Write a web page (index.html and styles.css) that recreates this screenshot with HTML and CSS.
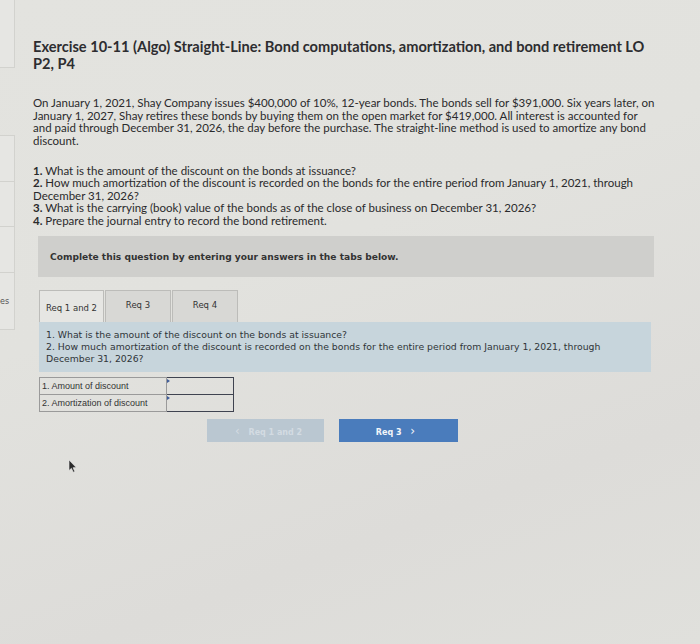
FILE: index.html
```html
<!DOCTYPE html>
<html>
<head>
<meta charset="utf-8">
<link rel="stylesheet" href="styles.css">
</head>
<body>
<div class="screen">
  <aside class="side">
    <div class="side-box b1"></div>
    <div class="side-box b2"></div>
    <div class="side-box b3"></div>
    <div class="side-box b4"></div>
    <div class="side-box b5"><span class="side-label">es</span></div>
  </aside>
  <main class="content">
    <h1 class="title">Exercise 10-11 (Algo) Straight-Line: Bond computations, amortization, and bond retirement LO<br>P2, P4</h1>
    <p class="intro">On January 1, 2021, Shay Company issues $400,000 of 10%, 12-year bonds. The bonds sell for $391,000. Six years later, on<br>January 1, 2027, Shay retires these bonds by buying them on the open market for $419,000. All interest is accounted for<br>and paid through December 31, 2026, the day before the purchase. The straight-line method is used to amortize any bond<br>discount.</p>
    <ol class="reqs">
      <li><b>1.</b> What is the amount of the discount on the bonds at issuance?</li>
      <li><b>2.</b> How much amortization of the discount is recorded on the bonds for the entire period from January 1, 2021, through<br>December 31, 2026?</li>
      <li><b>3.</b> What is the carrying (book) value of the bonds as of the close of business on December 31, 2026?</li>
      <li><b>4.</b> Prepare the journal entry to record the bond retirement.</li>
    </ol>
    <div class="notice">Complete this question by entering your answers in the tabs below.</div>
    <div class="tabs">
      <div class="tab active">Req 1 and 2</div>
      <div class="tab">Req 3</div>
      <div class="tab">Req 4</div>
    </div>
    <div class="prompt">1. What is the amount of the discount on the bonds at issuance?<br>2. How much amortization of the discount is recorded on the bonds for the entire period from January 1, 2021, through<br>December 31, 2026?</div>
    <table class="answers">
      <tr><td class="lbl">1. Amount of discount</td><td class="inp"><span class="mark"></span></td></tr>
      <tr><td class="lbl">2. Amortization of discount</td><td class="inp"><span class="mark"></span></td></tr>
    </table>
    <div class="nav">
      <button class="btn prev"><span class="chev">&lsaquo;</span> Req 1 and 2</button>
      <button class="btn next">Req 3 <span class="chev">&rsaquo;</span></button>
    </div>
    <div class="cursor-row">
      <svg class="cursor" width="9" height="14" viewBox="0 0 9 14"><path d="M1 1 L1 11.5 L3.4 9.3 L5.3 13.2 L6.8 12.5 L5 8.7 L8.2 8.5 Z" fill="#2a2a2a" stroke="#e8e8e8" stroke-width="0.6"/></svg>
    </div>
  </main>
</div>
</body>
</html>
```

FILE: styles.css
```css
html, body {
  margin: 0;
  padding: 0;
}
body {
  width: 700px;
  height: 644px;
  overflow: hidden;
  background: linear-gradient(160deg, #e3e3df 0%, #e2e2de 40%, #dddcd9 75%, #e0e0dc 100%);
  color: #2a2a2c;
}
.screen {
  display: flex;
  height: 644px;
}
.side {
  width: 15px;
  flex: none;
  display: flex;
  flex-direction: column;
}
.side-box {
  border: 1px solid #d2d2ce;
  border-left: none;
  border-top: none;
  background: #e6e6e3;
  box-sizing: border-box;
}
.b1 { height: 68px; border-top: none; }
.b2 { height: 47px; margin-top: 67px; border-top: 1px solid #d2d2ce; }
.b3 { height: 45px; }
.b4 { height: 46px; }
.b5 { height: 57px; position: relative; }
.side-label {
  position: absolute;
  left: 0;
  top: 24px;
  font-family: "DejaVu Sans", sans-serif;
  font-size: 8px;
  color: #555;
}
.content {
  flex: 1;
  padding-left: 18px;
  padding-top: 38px;
}
.title {
  font-family: Lato, "Open Sans", sans-serif;
  font-weight: 700;
  font-size: 14.6px;
  line-height: 17px;
  margin: 0;
  color: #2d2d30;
  white-space: nowrap;
}
.intro {
  font-family: Lato, "Open Sans", sans-serif;
  font-size: 11.5px;
  line-height: 12.7px;
  margin: 25px 0 0;
  white-space: nowrap;
}
.reqs {
  list-style: none;
  padding: 0;
  margin: 17px 0 0;
  font-family: Lato, "Open Sans", sans-serif;
  font-size: 11.5px;
  line-height: 12.5px;
  white-space: nowrap;
}
.reqs b { font-weight: 700; }
.notice {
  margin: 9px 0 0 5px;
  width: 616px;
  height: 41px;
  box-sizing: border-box;
  padding: 16px 0 0 12px;
  background: #cfcfcc;
  font-family: "DejaVu Sans", Verdana, sans-serif;
  font-weight: 700;
  font-size: 9.1px;
  color: #333;
}
.tabs {
  display: flex;
  margin: 13px 0 0 6px;
  height: 32px;
}
.tab {
  width: 66px;
  box-sizing: border-box;
  border: 1px solid #bcbcb9;
  border-bottom: none;
  background: #d8d8d5;
  margin-right: 1px;
  display: flex;
  align-items: center;
  justify-content: center;
  padding-bottom: 4px;
  font-family: "DejaVu Sans", Verdana, sans-serif;
  font-size: 8.5px;
  color: #333;
}
.tab.active {
  width: 65px;
  background: #e6e6e3;
  padding-top: 2px;
  padding-bottom: 0;
}
.prompt {
  margin-left: 6px;
  width: 612px;
  height: 50px;
  box-sizing: border-box;
  background: #c7d5dc;
  padding: 7px 7px 0;
  font-family: "DejaVu Sans", Verdana, sans-serif;
  font-size: 9.3px;
  line-height: 12px;
  color: #2f3438;
  white-space: nowrap;
}
.answers {
  margin: 5px 0 0 6px;
  border-collapse: collapse;
  font-family: "Liberation Sans", Arial, sans-serif;
  font-size: 9px;
  color: #333;
}
.answers td {
  height: 16px;
  padding: 0 0 0 2px;
}
.lbl {
  width: 124px;
  border: 1px solid #9a9a9a;
}
.inp {
  width: 64px;
  border: 1.5px solid #3f4350;
  position: relative;
}
.mark {
  position: absolute;
  left: 0;
  top: 1px;
  width: 0;
  height: 0;
  border-top: 2px solid transparent;
  border-bottom: 2px solid transparent;
  border-left: 3px solid #3f5d9a;
}
.nav {
  display: flex;
  margin: 7px 0 0 174px;
  gap: 15px;
}
.btn {
  height: 23px;
  border: none;
  font-family: "DejaVu Sans", Verdana, sans-serif;
  font-weight: 700;
  font-size: 8px;
  padding: 0;
}
.prev {
  width: 117px;
  background: #bac7d1;
  color: #d3dbe2;
}
.next {
  width: 119px;
  background: #4a7cbc;
  color: #f2f5f9;
}
.chev {
  font-size: 12px;
  margin: 0 6px;
  font-weight: 400;
}
.cursor-row {
  padding: 17px 0 0 35px;
}
.cursor { display: block; }
```
